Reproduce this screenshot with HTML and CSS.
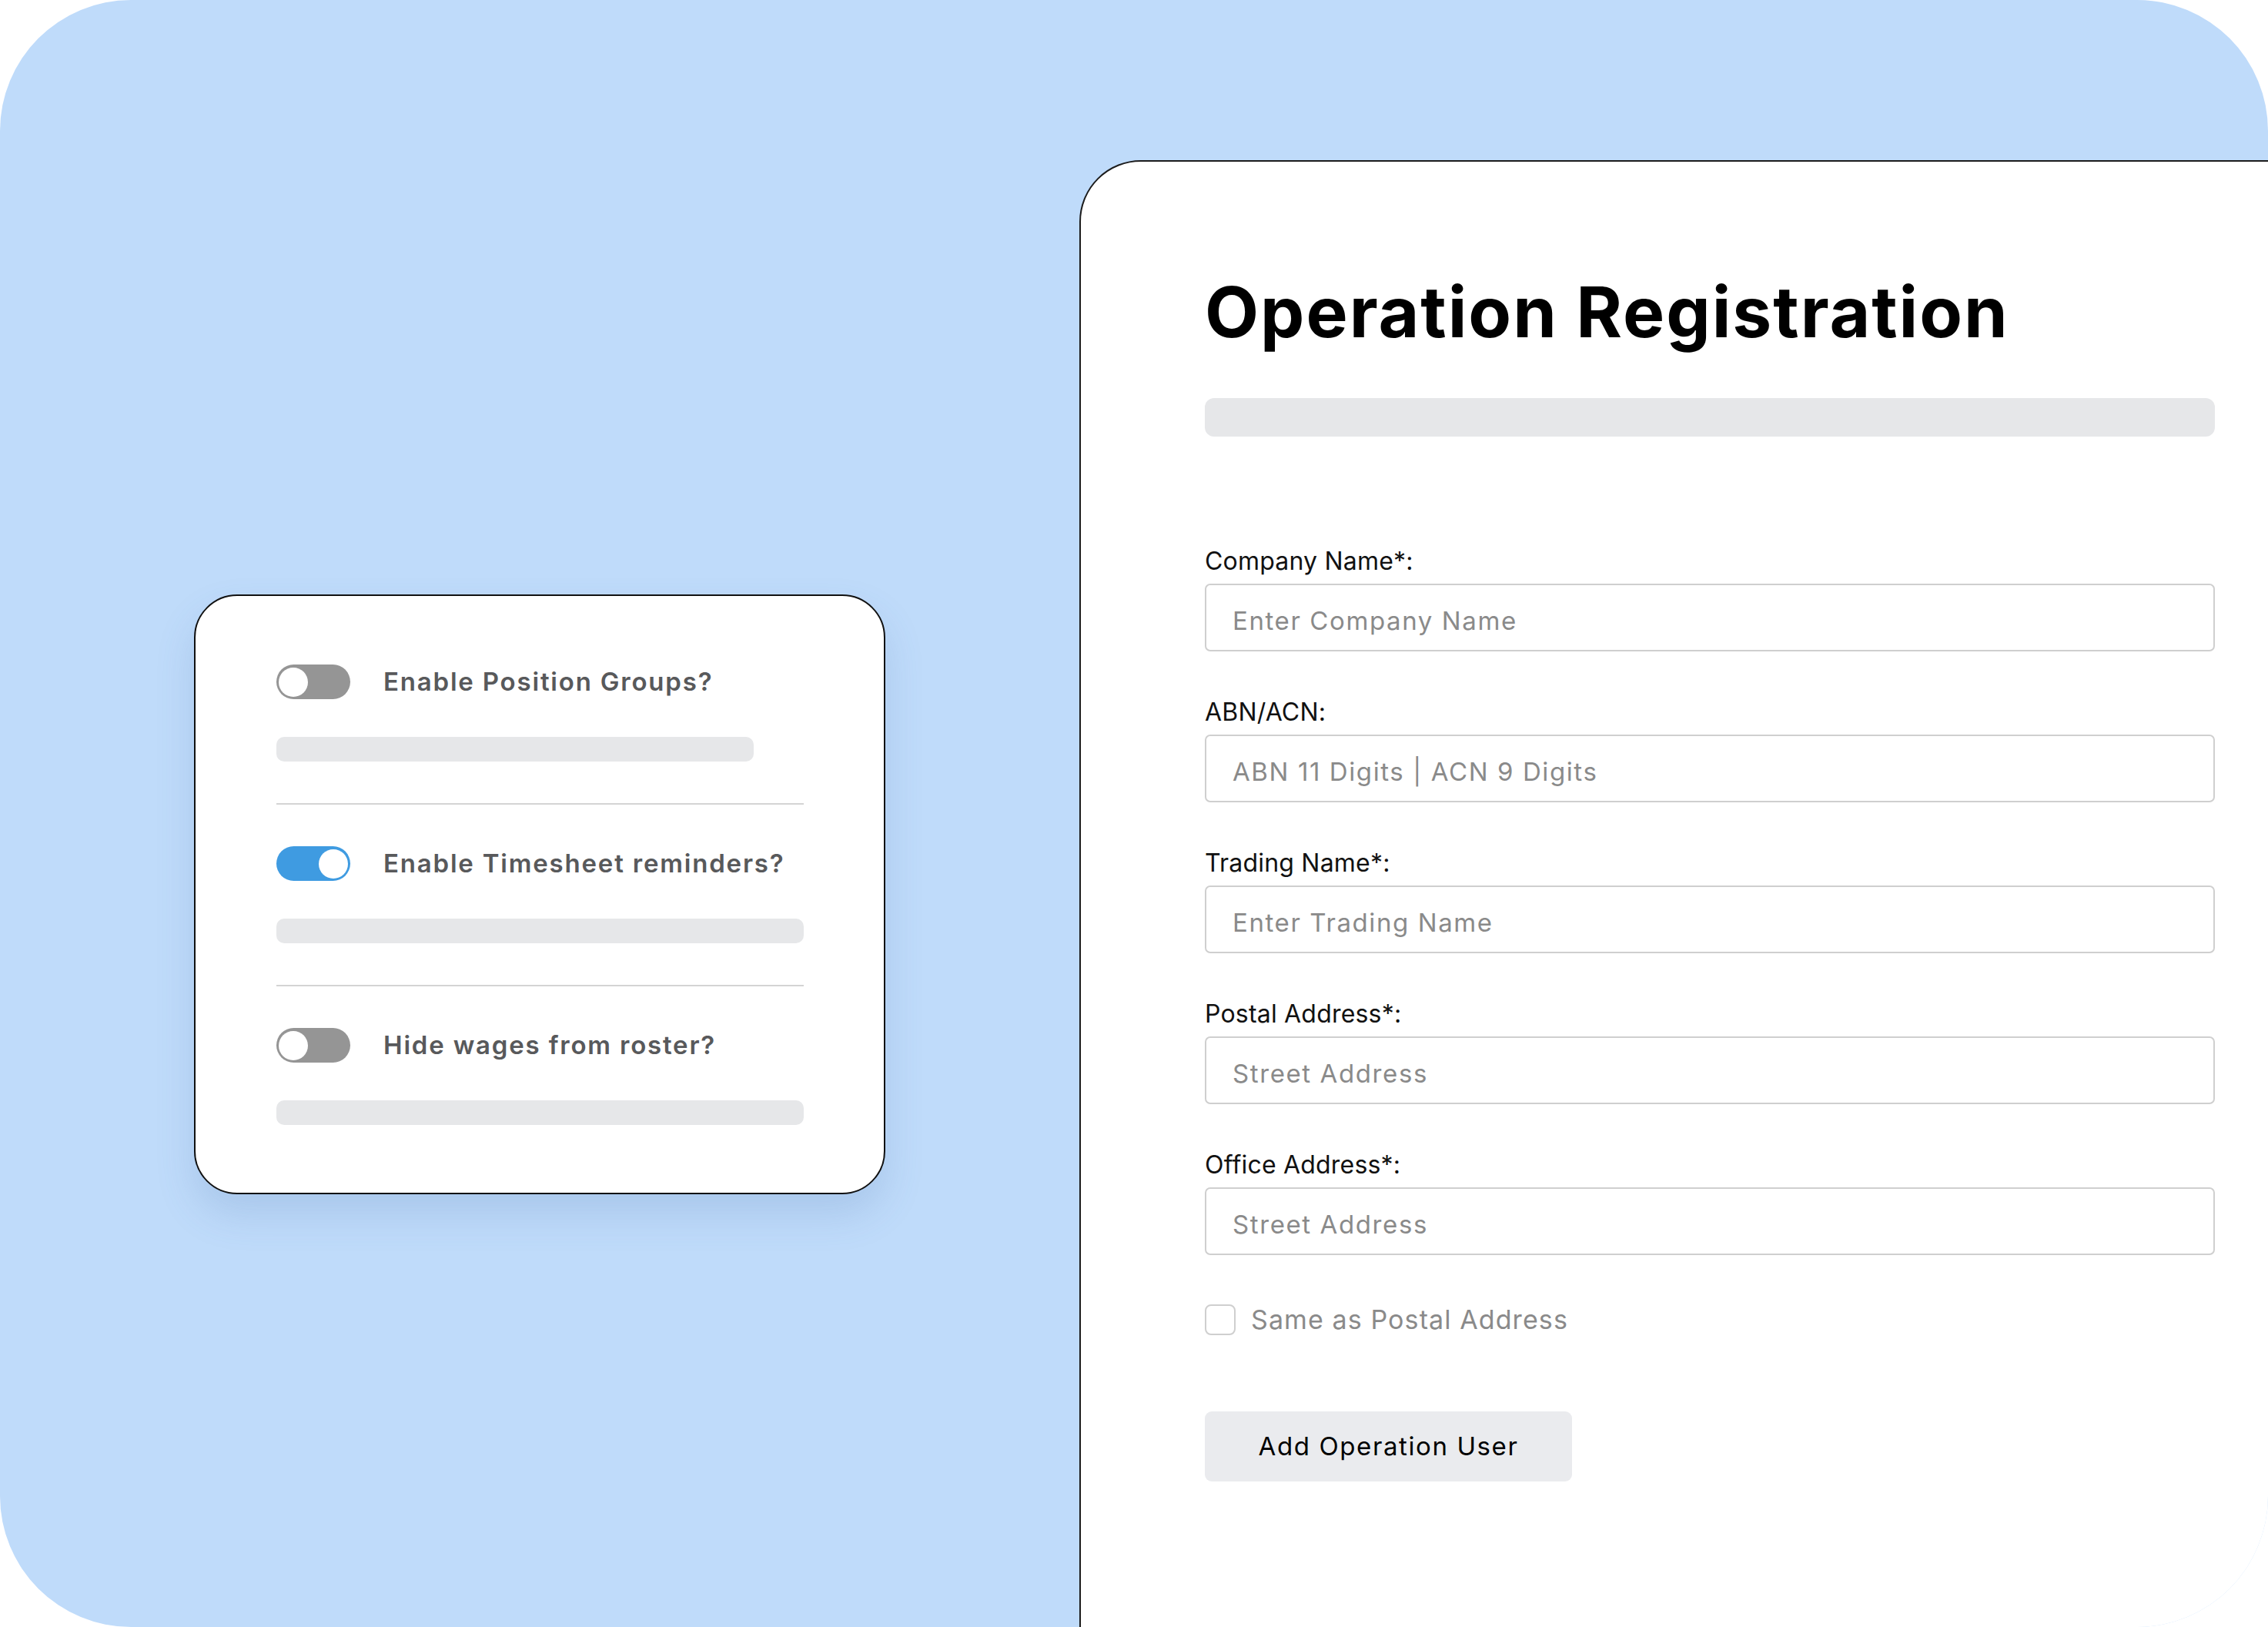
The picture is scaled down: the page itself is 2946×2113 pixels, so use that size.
FILE: index.html
```html
<!DOCTYPE html>
<html lang="en">
<head>
<meta charset="utf-8">
<title>Operation Registration</title>
<link rel="stylesheet" href="styles.css">
</head>
<body>
<div class="stage">
  <div class="card">
    <div class="opt">
      <div class="opt-row">
        <span class="toggle"><span class="knob"></span></span>
        <span class="opt-label">Enable Position Groups?</span>
      </div>
      <div class="skel skel-short"></div>
    </div>
    <div class="divider"></div>
    <div class="opt">
      <div class="opt-row">
        <span class="toggle toggle-on"><span class="knob"></span></span>
        <span class="opt-label">Enable Timesheet reminders?</span>
      </div>
      <div class="skel"></div>
    </div>
    <div class="divider"></div>
    <div class="opt">
      <div class="opt-row">
        <span class="toggle"><span class="knob"></span></span>
        <span class="opt-label">Hide wages from roster?</span>
      </div>
      <div class="skel"></div>
    </div>
  </div>

  <div class="panel">
    <h1 class="title">Operation Registration</h1>
    <div class="progress"></div>
    <div class="form">
      <div class="field">
        <div class="label">Company Name*:</div>
        <div class="input"><span class="ph">Enter Company Name</span></div>
      </div>
      <div class="field">
        <div class="label">ABN/ACN:</div>
        <div class="input"><span class="ph">ABN 11 Digits | ACN 9 Digits</span></div>
      </div>
      <div class="field">
        <div class="label">Trading Name*:</div>
        <div class="input"><span class="ph">Enter Trading Name</span></div>
      </div>
      <div class="field">
        <div class="label">Postal Address*:</div>
        <div class="input"><span class="ph">Street Address</span></div>
      </div>
      <div class="field">
        <div class="label">Office Address*:</div>
        <div class="input"><span class="ph">Street Address</span></div>
      </div>
      <div class="check-row">
        <span class="checkbox"></span>
        <span class="check-label">Same as Postal Address</span>
      </div>
      <div class="btn">Add Operation User</div>
    </div>
  </div>
</div>
</body>
</html>
```

FILE: styles.css
```css
html, body {
  margin: 0;
  padding: 0;
  background: #ffffff;
}

body {
  width: 2946px;
  height: 2113px;
  overflow: hidden;
  font-family: Inter, "Noto Sans", "Liberation Sans", sans-serif;
}

.stage {
  width: 2946px;
  height: 2113px;
  background: #bfdbfa;
  border-radius: 170px;
  overflow: hidden;
  display: flex;
  align-items: flex-start;
}

/* ---------- left settings card ---------- */
.card {
  flex: none;
  box-sizing: border-box;
  width: 898px;
  margin: 772px 0 0 252px;
  padding: 89px 104px 88px 105px;
  background: #ffffff;
  border: 2px solid #111111;
  border-radius: 56px;
  box-shadow: 0 26px 50px rgba(70, 110, 170, 0.18);
}

.opt-row {
  display: flex;
  align-items: center;
  height: 45px;
}

.toggle {
  flex: none;
  box-sizing: border-box;
  width: 96px;
  height: 45px;
  padding: 0 3px;
  border-radius: 23px;
  background: #959595;
  display: flex;
  align-items: center;
  justify-content: flex-start;
}

.toggle-on {
  background: #3f9be1;
  justify-content: flex-end;
}

.knob {
  width: 38px;
  height: 38px;
  border-radius: 50%;
  background: #ffffff;
}

.opt-label {
  margin-left: 43px;
  font-size: 33px;
  line-height: 33px;
  font-weight: 600;
  letter-spacing: 1.8px;
  color: #58595b;
}

.skel {
  margin-top: 49px;
  height: 32px;
  border-radius: 10px;
  background: #e6e7e9;
}

.skel-short {
  width: 620px;
}

.divider {
  height: 2px;
  margin: 54px 0;
  background: #d4d4d4;
}

/* ---------- right registration panel ---------- */
.panel {
  flex: none;
  box-sizing: border-box;
  width: 1700px;
  height: 2000px;
  margin: 208px 0 0 252px;
  padding: 150px 0 0 161px;
  background: #ffffff;
  border: 2px solid #1c1c1c;
  border-top-left-radius: 80px;
}

.title {
  margin: 0;
  font-size: 91px;
  line-height: 91px;
  font-weight: 700;
  letter-spacing: 2px;
  color: #000000;
}

.progress {
  width: 1312px;
  height: 50px;
  margin-top: 66px;
  border-radius: 12px;
  background: #e6e7e9;
}

.form {
  width: 1312px;
  margin-top: 146px;
}

.field + .field {
  margin-top: 63px;
}

.label {
  font-size: 32px;
  line-height: 32px;
  letter-spacing: 0.2px;
  color: #111111;
  margin-bottom: 13px;
}

.input {
  box-sizing: border-box;
  height: 88px;
  padding: 9px 0 0 34px;
  border: 2px solid #cfcfcf;
  border-radius: 7px;
  display: flex;
  align-items: center;
}

.ph {
  font-size: 33px;
  line-height: 33px;
  letter-spacing: 1.6px;
  color: #8a8a8a;
}

.check-row {
  margin-top: 64px;
  display: flex;
  align-items: center;
}

.checkbox {
  flex: none;
  box-sizing: border-box;
  width: 40px;
  height: 40px;
  border: 2px solid #cfcfcf;
  border-radius: 8px;
}

.check-label {
  margin-left: 20px;
  font-size: 34px;
  line-height: 34px;
  letter-spacing: 1.1px;
  color: #8a8a8a;
}

.btn {
  margin-top: 99px;
  width: 477px;
  height: 91px;
  border-radius: 9px;
  background: #eaebee;
  display: flex;
  align-items: center;
  justify-content: center;
  font-size: 33px;
  line-height: 33px;
  letter-spacing: 1.6px;
  color: #000000;
}
```
